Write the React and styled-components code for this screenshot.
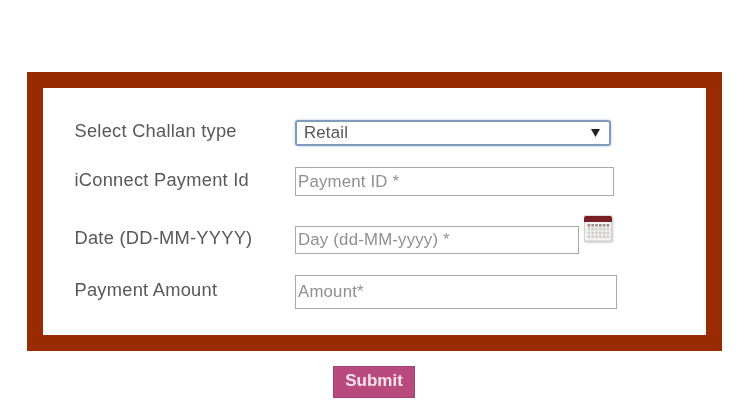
import React from "react";
import styled, { createGlobalStyle } from "styled-components";

const Global = createGlobalStyle`
  html, body { margin: 0; padding: 0; background: #fff; }
  body { font-family: "Liberation Sans", Arial, sans-serif; overflow: hidden; }
`;

const Page = styled.div`
  width: 750px;
  height: 415px;
  box-sizing: border-box;
  padding: 72px 28px 0 27px;
  filter: blur(0.35px);
`;

const Panel = styled.form`
  box-sizing: border-box;
  width: 695px;
  height: 279px;
  border: 16px solid #9a2a00;
  background: #fff;
  padding: 32px 0 0 32px;
  display: flex;
  flex-direction: column;
`;

const Row = styled.div`
  display: flex;
  align-items: center;
  height: ${(p) => p.$h}px;
  margin-bottom: ${(p) => p.$gap || 0}px;
`;

const Label = styled.label`
  width: 220px;
  flex: none;
  box-sizing: border-box;
  padding: 0 0 4px 0;
  margin-left: -0.5px;
  margin-right: 0.5px;
  font-size: 18.3px;
  letter-spacing: 0.25px;
  color: #585858;
  white-space: nowrap;
`;

const SelectWrap = styled.div`
  position: relative;
  width: 316px;
  height: 26px;
`;

const Select = styled.select`
  appearance: none;
  width: 100%;
  height: 100%;
  box-sizing: border-box;
  border: 2px solid #7f9db9;
  border-radius: 3px;
  box-shadow: 0 0 3px #b4cde8;
  background: #fff;
  padding: 0 0 2px 7px;
  font: 16.8px "Liberation Sans", Arial, sans-serif;
  letter-spacing: 0.2px;
  color: #555;
  outline: none;
`;

const Arrow = styled.svg`
  position: absolute;
  right: 11px;
  top: 8px;
  width: 9px;
  height: 9px;
  pointer-events: none;
`;

const Field = styled.input`
  box-sizing: border-box;
  width: ${(p) => p.$w}px;
  height: 100%;
  border: 1.5px solid #a9a9a9;
  background: #fff;
  padding: 0 0 0 2px;
  font: 16.8px "Liberation Sans", Arial, sans-serif;
  letter-spacing: 0.2px;
  color: #444;
  outline: none;
  &::placeholder { color: #8f8f8f; opacity: 1; }
`;

const CalendarIcon = styled.svg`
  width: 30px;
  height: 29px;
  flex: none;
  margin: -22px 0 0 5px;
  filter: drop-shadow(1px 1px 1px rgba(0, 0, 0, 0.22));
`;

const Actions = styled.div`
  display: flex;
  justify-content: center;
  padding: 15px 1px 0 0;
`;

const Submit = styled.button`
  width: 82px;
  height: 32px;
  border: 1px solid #9c4370;
  background: #b84a7e;
  color: #f7e3ee;
  font: bold 17px "Liberation Sans", Arial, sans-serif;
  padding: 0 0 3px;
`;

const Calendar = () => {
  const cells = [];
  for (let r = 0; r < 4; r++)
    for (let c = 0; c < 6; c++)
      cells.push(
        <rect
          key={`${r}-${c}`}
          x={3.6 + c * 3.8}
          y={9 + r * 3.8}
          width="2.6"
          height="2.6"
          fill={r === 0 ? "#a08a8a" : "#cdcdcd"}
        />
      );
  return (
    <CalendarIcon viewBox="0 0 30 29">
      <rect x="0.5" y="1" width="27" height="25" fill="#f3f2f1" stroke="#cfcfcf" />
      <path d="M0 7V2.5L1.5 1h25L28 2.5V7z" fill="#7a1f25" />
      {cells}
    </CalendarIcon>
  );
};

export default function App() {
  return (
    <Page>
      <Global />
      <Panel onSubmit={(e) => e.preventDefault()}>
        <Row $h={26} $gap={21}>
          <Label>Select Challan type</Label>
          <SelectWrap>
            <Select defaultValue="Retail">
              <option>Retail</option>
            </Select>
            <Arrow viewBox="0 0 9 9">
              <path d="M0 1h9L4.5 9z" fill="#222" />
            </Arrow>
          </SelectWrap>
        </Row>
        <Row $h={29} $gap={30}>
          <Label>iConnect Payment Id</Label>
          <Field $w={319} placeholder="Payment ID *" />
        </Row>
        <Row $h={28} $gap={21}>
          <Label>Date (DD-MM-YYYY)</Label>
          <Field $w={284} placeholder="Day (dd-MM-yyyy) *" />
          <Calendar />
        </Row>
        <Row $h={34}>
          <Label>Payment Amount</Label>
          <Field $w={322} placeholder="Amount*" />
        </Row>
      </Panel>
      <Actions>
        <Submit type="submit">Submit</Submit>
      </Actions>
    </Page>
  );
}
